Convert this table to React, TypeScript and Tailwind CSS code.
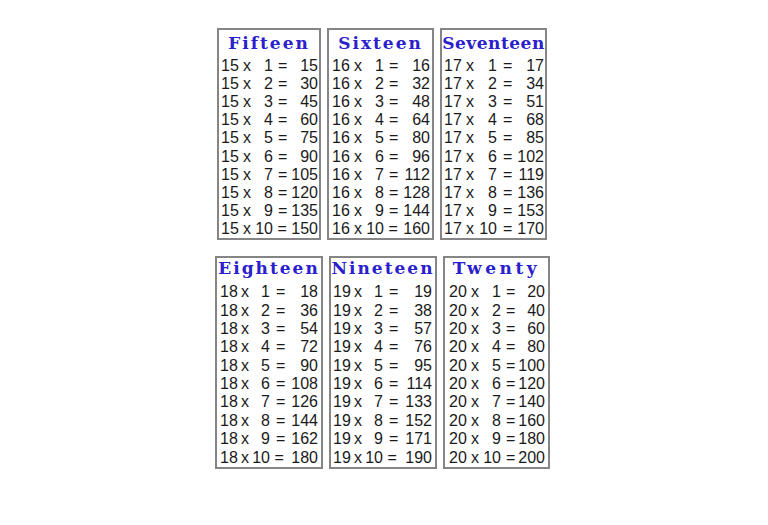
// Multiplication tables 15–20, laid out as two rows of three bordered cards.

type Table = {
  title: string;
  base: number;
  width: string;
  tracking: string;
  pad: string; // row padding (left/right) inside the border
  aCol: string; // width of the base-number column
  bCol: string; // width of the "x  n" column
  eq: string; // gap before "=" for 1..9
  eq10: string; // gap before "=" for 10
};

const topRow: Table[] = [
  {
    title: 'Fifteen', base: 15, width: 'w-[104px]', tracking: 'tracking-[2px]',
    pad: 'pl-[2px] pr-[1px]', aCol: 'w-[22px]', bCol: 'w-[30px]', eq: 'ml-[5px]', eq10: 'ml-[4.5px]',
  },
  {
    title: 'Sixteen', base: 16, width: 'w-[107px]', tracking: 'tracking-[2px]',
    pad: 'pl-[3px] pr-[2px]', aCol: 'w-[22px]', bCol: 'w-[30px]', eq: 'ml-[5px]', eq10: 'ml-[4.5px]',
  },
  {
    title: 'Seventeen', base: 17, width: 'w-[107px]', tracking: 'tracking-[0.5px]',
    pad: 'pl-[2px] pr-[1px]', aCol: 'w-[22px]', bCol: 'w-[31px]', eq: 'ml-[6px]', eq10: 'ml-[6px]',
  },
];

const bottomRow: Table[] = [
  {
    title: 'Eighteen', base: 18, width: 'w-[108px]', tracking: 'tracking-[2px]',
    pad: 'pl-[3px] pr-[3px]', aCol: 'w-[21px]', bCol: 'w-[29px]', eq: 'ml-[6px]', eq10: 'ml-[4.5px]',
  },
  {
    title: 'Nineteen', base: 19, width: 'w-[108px]', tracking: 'tracking-[2px]',
    pad: 'pl-[2px] pr-[3px]', aCol: 'w-[21px]', bCol: 'w-[29px]', eq: 'ml-[6px]', eq10: 'ml-[4.5px]',
  },
  {
    title: 'Twenty', base: 20, width: 'w-[107px]', tracking: 'tracking-[3.5px]',
    pad: 'pl-[4px] pr-[3px]', aCol: 'w-[22px]', bCol: 'w-[30px]', eq: 'ml-[5px]', eq10: 'ml-[5px]',
  },
];

function TableCard({ t, headerH, rowH }: { t: Table; headerH: string; rowH: string }) {
  const rows = Array.from({ length: 10 }, (_, i) => i + 1);
  return (
    <div className={`${t.width} border-2 border-[#858585] bg-white`}>
      <div
        className={`${headerH} ${t.tracking} flex items-center justify-center text-[17px] font-bold text-[#2a20cc]`}
        style={{ fontFamily: '"DejaVu Serif", serif' }}
      >
        {t.title}
      </div>
      {rows.map((n) => (
        <div key={n} className={`${rowH} ${t.pad} flex items-center text-[16px] leading-none text-[#1a1a1a]`}>
          <span className={t.aCol}>{t.base}</span>
          <span className={`${t.bCol} flex justify-between`}>
            <span>x</span>
            <span>{n}</span>
          </span>
          <span className={n === 10 ? t.eq10 : t.eq}>=</span>
          <span className="ml-auto">{t.base * n}</span>
        </div>
      ))}
    </div>
  );
}

export default function App() {
  return (
    <div
      className="w-[768px] h-[525px] bg-white flex flex-col pt-[28px] gap-[16px]"
      style={{ fontFamily: '"Liberation Sans", Arial, sans-serif' }}
    >
      <div className="flex gap-[6px] ml-[217px]">
        {topRow.map((t) => (
          <TableCard key={t.title} t={t} headerH="h-[27px]" rowH="h-[18.1px]" />
        ))}
      </div>
      <div className="flex gap-[6px] ml-[215px]">
        {bottomRow.map((t) => (
          <TableCard key={t.title} t={t} headerH="h-[25px] pb-[3px]" rowH="h-[18.4px]" />
        ))}
      </div>
    </div>
  );
}
